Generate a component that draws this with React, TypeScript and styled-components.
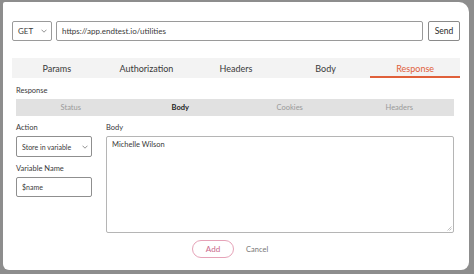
import React from "react";
import styled, { createGlobalStyle } from "styled-components";

const GlobalStyle = createGlobalStyle`
  html, body {
    margin: 0;
    padding: 0;
    background: #8d8d8d;
    font-family: Lato, "Open Sans", sans-serif;
  }
`;

const Dialog = styled.div`
  box-sizing: border-box;
  margin: 2px 5px 0 3px;
  width: 466px;
  height: 268px;
  background: #ffffff;
  border-radius: 2px 10px 8px 6px;
  padding: 19px 9px 0 9px;
  display: flex;
  flex-direction: column;
`;

const RequestBar = styled.div`
  display: flex;
  align-items: center;
  gap: 4px;
  height: 20px;
  margin-bottom: 17px;
`;

const Field = styled.div<{ $width?: number; $grow?: boolean }>`
  box-sizing: border-box;
  height: 100%;
  width: ${(p) => (p.$width ? `${p.$width}px` : "auto")};
  flex: ${(p) => (p.$grow ? "1" : "none")};
  border: 1px solid #9a9a9a;
  border-radius: 2px;
  display: flex;
  align-items: center;
  justify-content: space-between;
  padding: 0 4px 0 5px;
  font-size: 8px;
  color: #3a3a3a;
`;

const Chevron = () => (
  <svg width="6" height="4" viewBox="0 0 6 4">
    <path d="M0.5 0.7 L3 3.2 L5.5 0.7" fill="none" stroke="#777" strokeWidth="0.8" />
  </svg>
);

const SendButton = styled.button`
  box-sizing: border-box;
  height: 20px;
  width: 32px;
  margin-left: 1px;
  border: 1px solid #8a8a8a;
  border-radius: 2px;
  background: #fff;
  font-family: inherit;
  font-size: 8.5px;
  color: #2a2a2a;
  padding: 0;
`;

const TabBar = styled.div<{ $bg: string; $height: number }>`
  display: flex;
  background: ${(p) => p.$bg};
  height: ${(p) => p.$height}px;
`;

const Tab = styled.div<{ $active?: boolean }>`
  flex: 1;
  display: flex;
  align-items: center;
  justify-content: center;
  box-sizing: border-box;
  font-size: 9px;
  color: ${(p) => (p.$active ? "#e0603a" : "#3a3a3a")};
  border-bottom: 2px solid ${(p) => (p.$active ? "#e0603a" : "transparent")};
  padding-top: 2px;
`;

const SubTab = styled.div<{ $active?: boolean }>`
  flex: 1;
  display: flex;
  align-items: center;
  justify-content: center;
  font-size: 7.5px;
  font-weight: ${(p) => (p.$active ? 700 : 400)};
  color: ${(p) => (p.$active ? "#222" : "#9a9a9a")};
`;

const Section = styled.div`
  padding: 0 6px 0 4px;
  display: flex;
  flex-direction: column;
`;

const Label = styled.div<{ $top: number }>`
  font-size: 7.5px;
  color: #3a3a3a;
  margin-top: ${(p) => p.$top}px;
  margin-bottom: 4px;
  line-height: 9px;
`;

const Columns = styled.div`
  display: flex;
  gap: 14px;
`;

const LeftCol = styled.div`
  width: 76px;
  display: flex;
  flex-direction: column;
`;

const RightCol = styled.div`
  flex: 1;
  display: flex;
  flex-direction: column;
`;

const Box = styled.div<{ $height: number }>`
  box-sizing: border-box;
  height: ${(p) => p.$height}px;
  border: 1px solid #8f8f8f;
  border-radius: 2px;
  display: flex;
  align-items: center;
  justify-content: space-between;
  padding: 0 3px 0 5px;
  font-size: 7px;
  color: #3a3a3a;
`;

const TextArea = styled.div`
  box-sizing: border-box;
  height: 97px;
  border: 1px solid #b5b5b5;
  border-radius: 2px;
  padding: 3px 5px;
  font-size: 7.5px;
  color: #3a3a3a;
  position: relative;
`;

const Grip = styled.svg`
  position: absolute;
  right: 1px;
  bottom: 1px;
`;

const Footer = styled.div`
  display: flex;
  align-items: center;
  justify-content: center;
  gap: 12px;
  margin-top: 7px;
  padding-right: 8px;
`;

const AddButton = styled.button`
  box-sizing: border-box;
  width: 42px;
  height: 18px;
  border: 1px solid #e6a3b8;
  border-radius: 9px;
  background: #fff;
  color: #c9668a;
  font-family: inherit;
  font-size: 8px;
  padding: 0;
`;

const CancelLink = styled.span`
  font-size: 7.5px;
  color: #777;
  width: 26px;
`;

export default function App() {
  return (
    <>
      <GlobalStyle />
      <Dialog>
        <RequestBar>
          <Field $width={40}>
            GET <Chevron />
          </Field>
          <Field $grow>https://app.endtest.io/utilities</Field>
          <SendButton>Send</SendButton>
        </RequestBar>

        <TabBar $bg="#f3f3f3" $height={20}>
          <Tab>Params</Tab>
          <Tab>Authorization</Tab>
          <Tab>Headers</Tab>
          <Tab>Body</Tab>
          <Tab $active>Response</Tab>
        </TabBar>

        <Section>
          <Label $top={8}>Response</Label>
          <TabBar $bg="#e1e1e1" $height={17}>
            <SubTab>Status</SubTab>
            <SubTab $active>Body</SubTab>
            <SubTab>Cookies</SubTab>
            <SubTab>Headers</SubTab>
          </TabBar>

          <Columns>
            <LeftCol>
              <Label $top={7}>Action</Label>
              <Box $height={21}>
                Store in variable <Chevron />
              </Box>
              <Label $top={7}>Variable Name</Label>
              <Box $height={20}>$name</Box>
            </LeftCol>
            <RightCol>
              <Label $top={7}>Body</Label>
              <TextArea>
                Michelle Wilson
                <Grip width="5" height="5" viewBox="0 0 5 5">
                  <path d="M4.5 0.5 L0.5 4.5 M4.5 2.5 L2.5 4.5" stroke="#999" strokeWidth="0.6" />
                </Grip>
              </TextArea>
            </RightCol>
          </Columns>
        </Section>

        <Footer>
          <AddButton>Add</AddButton>
          <CancelLink>Cancel</CancelLink>
        </Footer>
      </Dialog>
    </>
  );
}
